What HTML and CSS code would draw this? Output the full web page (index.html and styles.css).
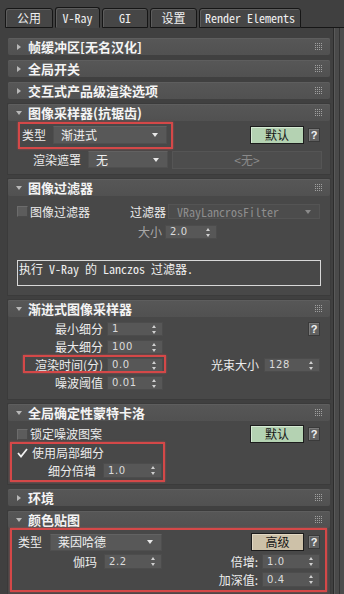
FILE: index.html
```html
<!DOCTYPE html>
<html lang="zh">
<head>
<meta charset="utf-8">
<title>V-Ray</title>
<link rel="stylesheet" href="styles.css">
</head>
<body>
<div class="tabs">
  <div class="tab t1">公用</div>
  <div class="tab t2 active">V-Ray</div>
  <div class="tab t3">GI</div>
  <div class="tab t4">设置</div>
  <div class="tab t5">Render Elements</div>
  <div class="tab-fill"></div>
</div>
<div class="main">
  <div class="rollouts">
    <section class="rollout">
      <div class="hdr"><span class="ic"><i class="tri closed"></i></span><span class="title">帧缓冲区[无名汉化]</span><span class="grip"></span></div>
    </section>
    <section class="rollout">
      <div class="hdr"><span class="ic"><i class="tri closed"></i></span><span class="title">全局开关</span><span class="grip"></span></div>
    </section>
    <section class="rollout">
      <div class="hdr"><span class="ic"><i class="tri closed"></i></span><span class="title">交互式产品级渲染选项</span><span class="grip"></span></div>
    </section>

    <section class="rollout open">
      <div class="hdr"><span class="ic"><i class="tri"></i></span><span class="title">图像采样器(抗锯齿)</span><span class="grip"></span></div>
      <div class="body b4">
        <div class="row r4a">
          <div class="hl hl1">
            <span class="lbl w24">类型</span>
            <div class="dd w114"><span>渐进式</span><i class="dn"></i></div>
          </div>
          <div class="btn green push">默认</div>
          <div class="q">?</div>
        </div>
        <div class="row r4b">
          <span class="lbl w48">渲染遮罩</span>
          <div class="dd w80"><span>无</span><i class="dn"></i></div>
          <div class="btn flat">&lt;无&gt;</div>
        </div>
      </div>
    </section>

    <section class="rollout open">
      <div class="hdr"><span class="ic"><i class="tri"></i></span><span class="title">图像过滤器</span><span class="grip"></span></div>
      <div class="body b5">
        <div class="row r5a">
          <span class="cb"></span>
          <span class="lbl">图像过滤器</span>
          <span class="lbl flt">过滤器</span>
          <div class="dd dis w152"><span class="mono">VRayLancrosFilter</span><i class="dn"></i></div>
        </div>
        <div class="row r5b">
          <span class="lbl dim w24">大小</span>
          <div class="spin w52"><span>2.0</span><i class="ud"></i></div>
        </div>
        <div class="desc mono">执行 V-Ray 的 Lanczos 过滤器.</div>
      </div>
    </section>

    <section class="rollout open">
      <div class="hdr"><span class="ic"><i class="tri"></i></span><span class="title">渐进式图像采样器</span><span class="grip"></span></div>
      <div class="body b6">
        <div class="row r6">
          <span class="lbl right w95">最小细分</span>
          <div class="spin w56"><span>1</span><i class="ud"></i></div>
          <div class="q push">?</div>
        </div>
        <div class="row r6">
          <span class="lbl right w95">最大细分</span>
          <div class="spin w56"><span>100</span><i class="ud"></i></div>
        </div>
        <div class="row r6">
          <div class="hl hl2">
            <span class="lbl right w95">渲染时间(分)</span>
            <div class="spin w56"><span>0.0</span><i class="ud"></i></div>
          </div>
          <span class="lbl push">光束大小</span>
          <div class="spin w56 beam"><span>128</span><i class="ud"></i></div>
        </div>
        <div class="row r6">
          <span class="lbl right w95">噪波阈值</span>
          <div class="spin w56"><span>0.01</span><i class="ud"></i></div>
        </div>
      </div>
    </section>

    <section class="rollout open">
      <div class="hdr"><span class="ic"><i class="tri"></i></span><span class="title">全局确定性蒙特卡洛</span><span class="grip"></span></div>
      <div class="body b7">
        <div class="row r7a">
          <span class="cb"></span>
          <span class="lbl">锁定噪波图案</span>
          <div class="btn green push">默认</div>
          <div class="q">?</div>
        </div>
        <div class="hl hl3">
          <div class="row r7b">
            <svg class="check" width="11" height="10" viewBox="0 0 11 10"><polyline points="1,5 4,8.5 10,1" fill="none" stroke="#f0f0f0" stroke-width="1.8"/></svg>
            <span class="lbl">使用局部细分</span>
          </div>
          <div class="row r7c">
            <span class="lbl w48">细分倍增</span>
            <div class="spin w59"><span>1.0</span><i class="ud"></i></div>
          </div>
        </div>
      </div>
    </section>

    <section class="rollout">
      <div class="hdr"><span class="ic"><i class="tri closed"></i></span><span class="title">环境</span><span class="grip"></span></div>
    </section>

    <section class="rollout open last">
      <div class="hdr"><span class="ic"><i class="tri"></i></span><span class="title">颜色贴图</span><span class="grip"></span></div>
      <div class="body b9 hl hl4">
        <div class="row r9a">
          <span class="lbl w24">类型</span>
          <div class="dd w112"><span>莱因哈德</span><i class="dn"></i></div>
          <div class="btn tan push">高级</div>
          <div class="q">?</div>
        </div>
        <div class="row r9b">
          <span class="lbl w24">伽玛</span>
          <div class="spin w58"><span>2.2</span><i class="ud"></i></div>
          <span class="lbl right rlbl push">倍增:</span>
          <div class="spin w58 rsp"><span>1.0</span><i class="ud"></i></div>
        </div>
        <div class="row r9c">
          <span class="lbl right rlbl push">加深值:</span>
          <div class="spin w58 rsp"><span>0.4</span><i class="ud"></i></div>
        </div>
      </div>
    </section>
  </div>
  <div class="scrollbar"></div>
</div>
</body>
</html>
```

FILE: styles.css
```css
* { box-sizing: border-box; }

body {
  margin: 0;
  width: 344px;
  height: 594px;
  overflow: hidden;
  background: #404040;
  color: #e8e8e8;
  font-family: "Noto Sans CJK SC", "Noto Sans", sans-serif;
  font-size: 12px;
  line-height: 1;
}

.mono {
  font-family: "Noto Sans Mono CJK SC", "Liberation Mono", "Noto Sans CJK SC", monospace;
}

/* ---------- tabs ---------- */
.tabs {
  display: flex;
  align-items: flex-end;
  height: 28px;
  padding-left: 5px;
}
.tab {
  height: 20px;
  margin-right: 2px;
  border: 1px solid #161616;
  border-radius: 3px 3px 0 0;
  background: #464646;
  box-shadow: inset 1px 1px 0 #5c5c5c;
  color: #f0f0f0;
  font-family: "Noto Sans Mono CJK SC", "Liberation Mono", "Noto Sans CJK SC", monospace;
  font-size: 12px;
  display: flex;
  align-items: center;
  justify-content: center;
}
.tab.active {
  height: 21px;
  border-bottom-color: #464646;
}
.t1 { width: 48px; }
.t2 { width: 45px; }
.t3 { width: 46px; }
.t4 { width: 47px; }
.t5 { width: 102px; margin-right: 0; }
.tab-fill {
  flex: 1;
  height: 1px;
  background: #161616;
}

/* ---------- main ---------- */
.main {
  display: flex;
  height: 566px;
}
.rollouts {
  width: 322px;
  margin-left: 8px;
  padding-top: 10px;
  display: flex;
  flex-direction: column;
  gap: 5px;
}
.scrollbar {
  width: 11px;
  margin-left: 3px;
  background: linear-gradient(90deg, #2c2c2c 0 1px, #5a5a5a 1px 2px, #4a4a4a 2px 6px, #333 6px 7px, #4c4c4c 7px);
}

/* ---------- rollout ---------- */
.rollout { flex: none; }
.rollout.open {
  background: #484848;
  box-shadow: 0 0 0 1px #3b3b3b;
}
.hdr {
  height: 17px;
  display: flex;
  align-items: center;
  background: linear-gradient(#575757, #515151);
  border-radius: 2px;
  box-shadow: inset 0 1px 0 #5e5e5e;
}
.ic {
  width: 20px;
  padding-left: 8px;
  display: flex;
  align-items: center;
}
.tri {
  display: block;
  width: 0;
  height: 0;
  border-top: 4px solid #b8b8b8;
  border-left: 3px solid transparent;
  border-right: 3px solid transparent;
}
.tri.closed {
  margin-left: 1px;
  border-top: 3px solid transparent;
  border-bottom: 3px solid transparent;
  border-left: 4px solid #b8b8b8;
  border-right: 0;
}
.title {
  font-weight: bold;
  font-size: 13px;
  color: #f4f4f4;
}
.grip {
  margin-left: auto;
  margin-right: 8px;
  width: 7px;
  height: 7px;
  background: repeating-linear-gradient(90deg, #a0a0a0 0 1px, transparent 1px 2px);
  -webkit-mask-image: repeating-linear-gradient(0deg, #000 0 1px, transparent 1px 2px);
  mask-image: repeating-linear-gradient(0deg, #000 0 1px, transparent 1px 2px);
}

.body { position: relative; display: flow-root; }
.b4 { height: 53px; }
.b5 { height: 99px; }
.b6 { height: 82px; }
.b7 { height: 63px; }
.b9 { height: 66px; }

.row {
  display: flex;
  align-items: center;
}

.lbl { white-space: nowrap; color: #ececec; }
.lbl.right { text-align: right; }
.lbl.dim { color: #a8a8a8; }
.w24 { width: 24px; }
.w48 { width: 48px; }
.w95 { width: 95px; }

/* ---------- highlight annotations ---------- */
.hl { position: relative; }
.hl::after {
  content: "";
  position: absolute;
  border: 2px solid #d44848;
  box-shadow: 0 0 2px rgba(220, 80, 80, 0.6);
  pointer-events: none;
}
.hl1 { display: flex; align-items: center; }
.hl1::after { inset: -4px -6px -5px -4px; }
.hl2 { display: flex; align-items: center; }
.hl2::after { top: -3px; bottom: -1px; left: 15px; right: -3px; }
.hl3::after { top: -4px; bottom: -4px; left: 2px; right: 165px; }
.hl4::after { top: 0; bottom: 2px; left: 2px; right: 3px; }

/* ---------- controls ---------- */
.dd {
  height: 18px;
  display: flex;
  align-items: center;
  padding-left: 7px;
  background: #585858;
  border: 1px solid #4f4f4f;
  border-top-color: #626262;
  color: #f0f0f0;
}
.dd .dn {
  margin-left: auto;
  margin-right: 8px;
  width: 0;
  height: 0;
  border-top: 4px solid #e8e8e8;
  border-left: 3px solid transparent;
  border-right: 3px solid transparent;
}
.dd.dis {
  background: #4c4c4c;
  border-color: #545454;
  color: #8e8e8e;
  height: 15px;
  padding-left: 8px;
  font-size: 12px;
}
.dd.dis .dn { border-top-color: #8a8a8a; }
.w80 { width: 80px; }
.w112 { width: 112px; }
.w114 { width: 114px; }
.w152 { width: 152px; }

.spin {
  height: 14px;
  display: flex;
  align-items: center;
  padding-left: 4px;
  background: #575757;
  border: 1px solid #4c4c4c;
  color: #dcdcdc;
  font-family: "DejaVu Sans", "Liberation Sans", sans-serif;
  font-size: 10px;
  letter-spacing: 0.6px;
}
.spin .ud {
  margin-left: auto;
  margin-right: 5px;
  width: 5px;
  height: 9px;
  position: relative;
}
.spin .ud::before,
.spin .ud::after {
  content: "";
  position: absolute;
  left: 0;
  border-left: 2.5px solid transparent;
  border-right: 2.5px solid transparent;
}
.spin .ud::before { top: 0; border-bottom: 3px solid #d0d0d0; }
.spin .ud::after { bottom: 0; border-top: 3px solid #d0d0d0; }
.w52 { width: 52px; }
.w56 { width: 56px; }
.w58 { width: 58px; }
.w59 { width: 59px; }

.btn {
  height: 18px;
  display: flex;
  align-items: center;
  justify-content: center;
  font-size: 12px;
}
.btn.green {
  width: 54px;
  background: #b4d2b2;
  border: 1px solid #1c1c1c;
  box-shadow: inset 1px 1px 0 #d6ead4;
  color: #161616;
}
.btn.tan {
  width: 53px;
  background: #cdc1a8;
  border: 1px solid #1c1c1c;
  box-shadow: inset 1px 1px 0 #e2d8c4;
  color: #161616;
}
.btn.flat {
  width: 150px;
  height: 18px;
  margin-left: 4px;
  background: #4d4d4d;
  border: 1px solid #555;
  color: #8a8a8a;
}
.q {
  width: 12px;
  height: 14px;
  margin-left: 4px;
  margin-right: 10px;
  display: flex;
  align-items: center;
  justify-content: center;
  background: #606060;
  border: 1px solid #3a3a3a;
  box-shadow: inset 1px 1px 0 #7a7a7a;
  color: #f2f2f2;
  font-family: "Liberation Sans", sans-serif;
  font-size: 11px;
  font-weight: bold;
}

.cb {
  width: 11px;
  height: 11px;
  margin-right: 2px;
  background: #5c5c5c;
  border: 1px solid #4a4a4a;
  border-top-color: #6c6c6c;
  border-left-color: #6c6c6c;
}
.check { margin-right: 4px; }

/* push an item to the right end of its row */
.row > .push { margin-left: auto; }

/* ---------- rollout: image sampler ---------- */
.r4a { margin-top: 4px; height: 20px; padding-left: 14px; }
.r4a .lbl { margin-right: 7px; }
.r4b { margin-top: 6px; height: 17px; padding-left: 25px; }
.r4b .lbl { margin-right: 7px; }
.r4b .dd { height: 17px; }

/* ---------- rollout: image filter ---------- */
.r5a { padding-top: 8px; height: 23px; padding-left: 9px; }
.r5a .flt { margin-left: 40px; margin-right: 2px; }
.r5b { margin-top: 6px; height: 14px; padding-left: 130px; }
.r5b .lbl { margin-right: 3px; }
.desc {
  margin: 21px 0 0 9px;
  width: 304px;
  height: 26px;
  border: 1px solid #d8d8d8;
  padding: 2px 0 0 1px;
  color: #f0f0f0;
  font-size: 12px;
}

/* ---------- rollout: progressive sampler ---------- */
.b6 { padding-top: 5px; display: flex; flex-direction: column; gap: 4px; }
.r6 { height: 14px; }
.r6 .w95 { margin-right: 4px; }
.r6 .beam { margin-left: 5px; margin-right: 10px; }

/* ---------- rollout: DMC ---------- */
.r7a { margin-top: 4px; height: 18px; padding-left: 9px; }
.r7b { margin-top: 3px; height: 14px; padding-left: 9px; }
.r7c { margin-top: 3px; height: 15px; padding-left: 40px; }
.r7c .lbl { margin-right: 7px; }
.r7c .spin { height: 15px; }

/* ---------- rollout: color mapping ---------- */
.r9a { padding-top: 5px; height: 23px; padding-left: 10px; }
.r9a .lbl { margin-right: 8px; }
.r9a .dd { height: 17px; }
.r9b { margin-top: 3px; height: 15px; padding-left: 65px; }
.r9b > .lbl:first-child { margin-right: 7px; }
.r9c { margin-top: 3px; height: 15px; }
.rlbl { margin-right: 4px; }
.rsp { margin-right: 10px; }
.r9b .spin, .r9c .spin { height: 15px; }
```
